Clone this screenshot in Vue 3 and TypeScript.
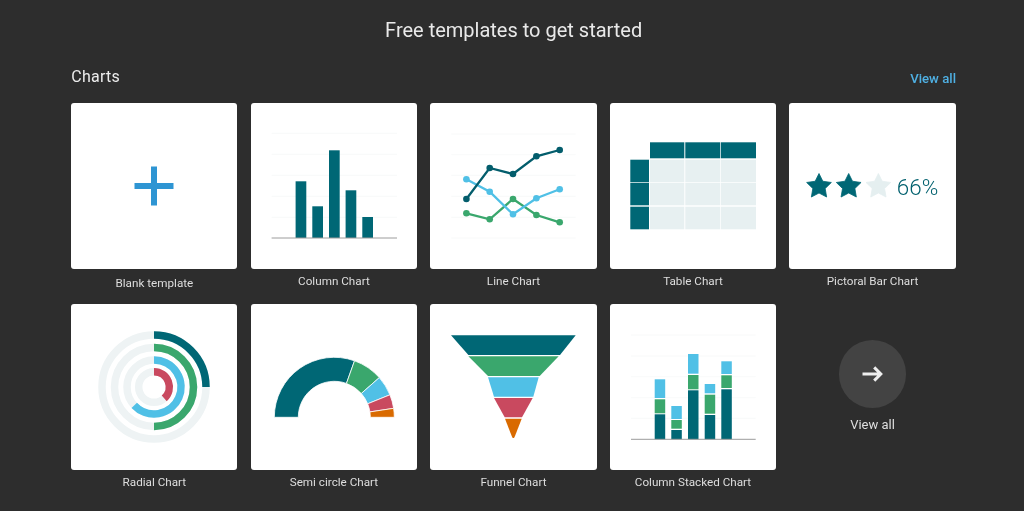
<script setup lang="ts">
const TEAL = '#006775'
const GREEN = '#3aa76d'
const BLUE = '#50c0e6'
const RED = '#c9495f'
const ORANGE = '#d96a00'

const items = [
  { kind: 'blank', label: 'Blank template' },
  { kind: 'column', label: 'Column Chart' },
  { kind: 'line', label: 'Line Chart' },
  { kind: 'table', label: 'Table Chart' },
  { kind: 'pictoral', label: 'Pictoral Bar Chart' },
  { kind: 'radial', label: 'Radial Chart' },
  { kind: 'semi', label: 'Semi circle Chart' },
  { kind: 'funnel', label: 'Funnel Chart' },
  { kind: 'stacked', label: 'Column Stacked Chart' },
]

const columnBars = [
  { x: 44.6, top: 78.3 },
  { x: 61.3, top: 103.3 },
  { x: 78, top: 47.3 },
  { x: 94.6, top: 87.3 },
  { x: 111.3, top: 114 },
]
const columnGrid = [30.3, 51.3, 72.3, 93.3, 114.3]

const lineX = [36.4, 59.7, 83, 106.4, 129.7]
const lineGrid = [31, 51.7, 72.3, 93.3, 114.3, 135]
const lineSeries = [
  { color: GREEN, y: [110.3, 116.3, 96, 112, 119.3] },
  { color: BLUE, y: [76.3, 88.7, 111.3, 95.3, 86.3] },
  { color: '#035d6c', y: [96, 65, 71, 53.3, 47] },
]
const pts = (ys: number[]) => ys.map((y, i) => `${lineX[i]},${y}`).join(' ')

const tableCols = [
  { x: 40, w: 34.3 },
  { x: 75.3, w: 34.7 },
  { x: 110.7, w: 35.3 },
]
const tableRows = [
  { y: 56.7, h: 22.6 },
  { y: 80, h: 22.3 },
  { y: 103.7, h: 22.6 },
]

function star(cx: number, cy: number, R: number): string {
  const out: string[] = []
  for (let i = 0; i < 10; i++) {
    const r = i % 2 === 0 ? R : R * 0.5
    const a = (Math.PI / 5) * i - Math.PI / 2
    out.push(`${(cx + r * Math.cos(a)).toFixed(2)},${(cy + r * Math.sin(a)).toFixed(2)}`)
  }
  return out.join(' ')
}
const stars = [
  { points: star(30, 83.5, 13), color: TEAL },
  { points: star(59.7, 83.5, 13), color: TEAL },
  { points: star(89.4, 83.5, 13), color: '#e5eff0' },
]

function arc(r: number, deg: number): string {
  const a = (deg * Math.PI) / 180
  const x = 83 + r * Math.sin(a)
  const y = 83 - r * Math.cos(a)
  return `M83 ${83 - r} A${r} ${r} 0 ${deg > 180 ? 1 : 0} 1 ${x.toFixed(2)} ${y.toFixed(2)}`
}
const radial = [
  { r: 52, deg: 90, color: TEAL },
  { r: 39.5, deg: 180, color: GREEN },
  { r: 27, deg: 227, color: BLUE },
  { r: 15.3, deg: 138, color: RED },
]

function sector(a0: number, a1: number): string {
  const cx = 83.3
  const cy = 113.3
  const R = 60
  const r = 36
  const p = (rad: number, d: number) => {
    const t = (d * Math.PI) / 180
    return `${(cx + rad * Math.cos(t)).toFixed(2)} ${(cy - rad * Math.sin(t)).toFixed(2)}`
  }
  return `M${p(R, a0)} A${R} ${R} 0 0 1 ${p(R, a1)} L${p(r, a1)} A${r} ${r} 0 0 0 ${p(r, a0)} Z`
}
const semi = [
  { d: sector(180, 70.3), color: TEAL },
  { d: sector(70.3, 41.4), color: GREEN },
  { d: sector(41.4, 22), color: BLUE },
  { d: sector(22, 8.6), color: RED },
  { d: sector(8.6, 0), color: ORANGE },
]

const funnel = [
  { points: '21,31.3 145.7,31.3 130,51 38.4,51', color: TEAL },
  { points: '38.4,52.3 128.7,52.3 109.7,72 58,72', color: GREEN },
  { points: '58,73.3 108.7,73.3 103.3,92.7 64,92.7', color: BLUE },
  { points: '64,94 102.7,94 92,113.3 74.7,113.3', color: RED },
  { points: '75,114.7 91.7,114.7 85,132 84,134 82.7,134 81.7,132', color: ORANGE },
]

const stackedGrid = [31, 52, 72.7, 93.7, 114.3]
const stackedBars = [
  { x: 44.7, segs: [[75.3, 94], [95.3, 109.3], [110.3, 135.3]] },
  { x: 61.3, segs: [[102, 115], [116, 124.7], [126, 135.3]] },
  { x: 78, segs: [[50, 69.7], [71, 85.3], [86.3, 135.3]] },
  { x: 94.7, segs: [[80, 89.3], [90.7, 109.7], [111, 135.3]] },
  { x: 111.3, segs: [[57.3, 70], [71.3, 84], [85.3, 135.3]] },
]
const stackColors = [BLUE, GREEN, TEAL]
</script>

<template>
  <main class="page">
    <h1 class="title">Free templates to get started</h1>
    <header class="section-head">
      <h2 class="section-title">Charts</h2>
      <a class="view-link">View all</a>
    </header>
    <section class="grid">
      <figure v-for="item in items" :key="item.kind" class="item">
        <div class="card">
          <svg class="art" viewBox="0 0 166 166">
            <template v-if="item.kind === 'blank'">
              <rect x="80" y="63.5" width="6" height="39" fill="#2e95d3" />
              <rect x="63.5" y="80" width="39" height="6" fill="#2e95d3" />
            </template>

            <template v-else-if="item.kind === 'column'">
              <line v-for="y in columnGrid" :key="y" x1="20.6" x2="146" :y1="y" :y2="y" class="gridline" />
              <rect v-for="b in columnBars" :key="b.x" :x="b.x" :y="b.top" width="10.7" :height="135 - b.top" :fill="TEAL" />
              <line x1="20.6" x2="146" y1="135" y2="135" class="baseline" />
            </template>

            <template v-else-if="item.kind === 'line'">
              <line v-for="y in lineGrid" :key="y" x1="21.3" x2="145.7" :y1="y" :y2="y" class="gridline" />
              <g v-for="s in lineSeries" :key="s.color">
                <polyline :points="pts(s.y)" fill="none" :stroke="s.color" stroke-width="2.3" />
                <circle v-for="(y, i) in s.y" :key="i" :cx="lineX[i]" :cy="y" r="3.3" :fill="s.color" />
              </g>
            </template>

            <template v-else-if="item.kind === 'table'">
              <rect v-for="c in tableCols" :key="c.x" :x="c.x" y="39.3" :width="c.w" height="16" :fill="TEAL" />
              <g v-for="r in tableRows" :key="r.y">
                <rect x="20.3" :y="r.y" width="18.7" :height="r.h" :fill="TEAL" />
                <rect v-for="c in tableCols" :key="c.x" :x="c.x" :y="r.y" :width="c.w" :height="r.h" fill="#e7f0f1" />
              </g>
            </template>

            <template v-else-if="item.kind === 'pictoral'">
              <polygon
                v-for="s in stars"
                :key="s.points"
                :points="s.points"
                :fill="s.color"
                :stroke="s.color"
                stroke-width="0.8"
                stroke-linejoin="round"
              />
              <text x="107.8" y="91.5" class="percent">66%</text>
            </template>

            <template v-else-if="item.kind === 'radial'">
              <circle v-for="a in radial" :key="a.r" cx="83" cy="83" :r="a.r" class="track" />
              <path v-for="a in radial" :key="a.color" :d="arc(a.r, a.deg)" :stroke="a.color" fill="none" stroke-width="7.5" />
            </template>

            <template v-else-if="item.kind === 'semi'">
              <path v-for="s in semi" :key="s.color" :d="s.d" :fill="s.color" stroke="#fff" stroke-width="0.8" />
            </template>

            <template v-else-if="item.kind === 'funnel'">
              <polygon v-for="f in funnel" :key="f.color" :points="f.points" :fill="f.color" />
            </template>

            <template v-else-if="item.kind === 'stacked'">
              <line v-for="y in stackedGrid" :key="y" x1="21" x2="145.7" :y1="y" :y2="y" class="gridline" />
              <g v-for="b in stackedBars" :key="b.x">
                <rect
                  v-for="(seg, i) in b.segs"
                  :key="i"
                  :x="b.x"
                  :y="seg[0]"
                  width="10.5"
                  :height="seg[1] - seg[0]"
                  :fill="stackColors[i]"
                />
              </g>
              <line x1="21" x2="145.7" y1="135.3" y2="135.3" class="baseline" />
            </template>
          </svg>
        </div>
        <figcaption class="label" :class="{ 'label-blank': item.kind === 'blank' }">{{ item.label }}</figcaption>
      </figure>

      <div class="more">
        <div class="more-circle">
          <svg width="21" height="18" viewBox="0 0 21 18">
            <path d="M0.5 9H18.5M12.2 2.4L18.8 9L12.2 15.6" fill="none" stroke="#eeeeee" stroke-width="3" />
          </svg>
        </div>
        <span class="more-label">View all</span>
      </div>
    </section>
  </main>
</template>

<style>
html,
body {
  margin: 0;
  background: #2d2d2d;
}
</style>

<style scoped>
.page {
  box-sizing: border-box;
  width: 1024px;
  height: 511px;
  overflow: hidden;
  padding: 18px 68px 0 71.35px;
  background: #2d2d2d;
  font-family: Roboto, "Liberation Sans", sans-serif;
  filter: blur(0.35px);
}
.title {
  margin: 0;
  font-size: 20px;
  font-weight: 400;
  line-height: 24px;
  text-align: center;
  color: #e9e9e9;
}
.section-head {
  display: flex;
  justify-content: space-between;
  align-items: flex-end;
  margin-top: 23px;
  height: 22px;
  margin-bottom: 16px;
}
.section-title {
  margin: 0;
  font-size: 16px;
  font-weight: 400;
  line-height: 20px;
  letter-spacing: 0.25px;
  color: #ececec;
}
.view-link {
  font-size: 13.2px;
  font-weight: 500;
  line-height: 16px;
  color: #4fb0e3;
}
.grid {
  display: grid;
  grid-template-columns: repeat(5, 166.1px);
  column-gap: 13.45px;
  row-gap: 0;
}
.item {
  margin: 0;
  height: 201px;
}
.card {
  width: 100%;
  height: 166px;
  border-radius: 3px;
  background: #fff;
  overflow: hidden;
}
.art {
  display: block;
  width: 166px;
  height: 166px;
}
.gridline {
  stroke: #f6f7f7;
  stroke-width: 0.8;
}
.baseline {
  stroke: #9c9c9c;
  stroke-width: 1;
}
.track {
  fill: none;
  stroke: #eef3f4;
  stroke-width: 7.5;
}
.percent {
  font-family: Roboto, "Liberation Sans", sans-serif;
  font-size: 22.4px;
  font-weight: 300;
  fill: #00606e;
}
.label {
  margin-top: 5px;
  font-size: 11.7px;
  line-height: 14px;
  text-align: center;
  color: #dedede;
}
.label-blank {
  margin-top: 6.5px;
}
.more {
  display: flex;
  flex-direction: column;
  align-items: center;
  padding-top: 36px;
}
.more-circle {
  display: flex;
  align-items: center;
  justify-content: center;
  width: 67.5px;
  height: 67.5px;
  border-radius: 50%;
  background: #434343;
}
.more-label {
  margin-top: 9px;
  font-size: 13px;
  line-height: 16px;
  color: #dedede;
}
</style>
